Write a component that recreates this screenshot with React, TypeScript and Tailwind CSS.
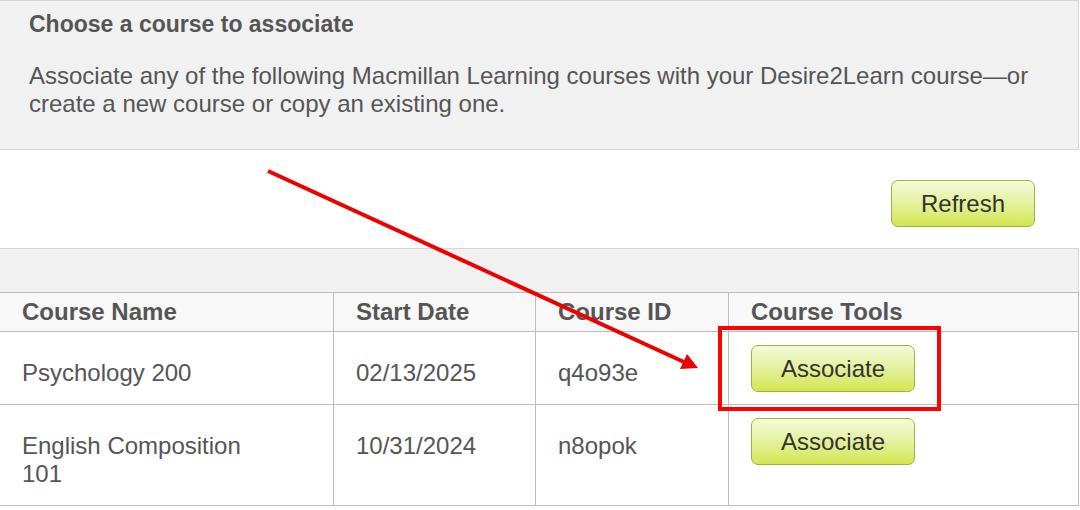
const courses = [
  { name: "Psychology 200", start: "02/13/2025", id: "q4o93e" },
  { name: "English Composition 101", start: "10/31/2024", id: "n8opok" },
];

function LimeButton({ label, className = "" }: { label: string; className?: string }) {
  return (
    <button
      className={`rounded-[7px] border border-[#a1b04a] bg-gradient-to-b from-[#f5fad8] to-[#d3e64c] text-[24px] leading-none text-[#333] ${className}`}
    >
      {label}
    </button>
  );
}

export default function App() {
  return (
    <div className="relative h-[510px] w-[1080px] overflow-hidden bg-white font-['Liberation_Sans',Arial,sans-serif] text-[#555]">
      <div className="-ml-px w-[1080px]">
        <div className="h-[150px] border border-[#d6d6d6] bg-[#f1f1f1] pl-[29px] pt-[9px]">
          <h2 className="text-[23px] font-bold leading-[28px]">Choose a course to associate</h2>
          <p className="mt-[24px] w-[1020px] text-[24px] leading-[28px]">
            Associate any of the following Macmillan Learning courses with your Desire2Learn course—or create a new
            course or copy an existing one.
          </p>
        </div>

        <div className="flex h-[98px] items-start justify-end pr-[44px] pt-[30px]">
          <LimeButton label="Refresh" className="h-[47px] w-[144px]" />
        </div>

        <div className="h-[44px] border border-b-0 border-[#d6d6d6] bg-[#f1f1f1]" />

        <table className="w-[1080px] table-fixed border-collapse text-[24px] leading-[28px]">
          <colgroup>
            <col className="w-[334px]" />
            <col className="w-[202px]" />
            <col className="w-[193px]" />
            <col />
          </colgroup>
          <thead>
            <tr className="h-[39px] bg-[#f8f8f8]">
              {["Course Name", "Start Date", "Course ID", "Course Tools"].map((h) => (
                <th key={h} className="border border-[#bdbdbd] pl-[22px] text-left font-bold">
                  {h}
                </th>
              ))}
            </tr>
          </thead>
          <tbody>
            {courses.map((c) => (
              <tr key={c.id}>
                <td className="border border-[#bdbdbd] pb-[17px] pl-[22px] pr-[60px] pt-[27px] align-top">{c.name}</td>
                <td className="border border-[#bdbdbd] pb-[17px] pl-[22px] pt-[27px] align-top">{c.start}</td>
                <td className="border border-[#bdbdbd] pb-[17px] pl-[22px] pt-[27px] align-top">{c.id}</td>
                <td className="border border-[#bdbdbd] pl-[22px] pt-[13px] align-top">
                  <LimeButton label="Associate" className="h-[47px] w-[164px]" />
                </td>
              </tr>
            ))}
          </tbody>
        </table>
      </div>

      {/* annotation overlay */}
      <div className="absolute left-[718px] top-[326px] h-[85px] w-[223px] border-4 border-[#f00]" />
      <svg className="pointer-events-none absolute left-0 top-0" width="1080" height="510">
        <line x1="268" y1="171" x2="684" y2="362" stroke="#ee0000" strokeWidth="4" />
        <polygon points="698,368 680,369 687,354" fill="#ee0000" />
      </svg>
    </div>
  );
}
